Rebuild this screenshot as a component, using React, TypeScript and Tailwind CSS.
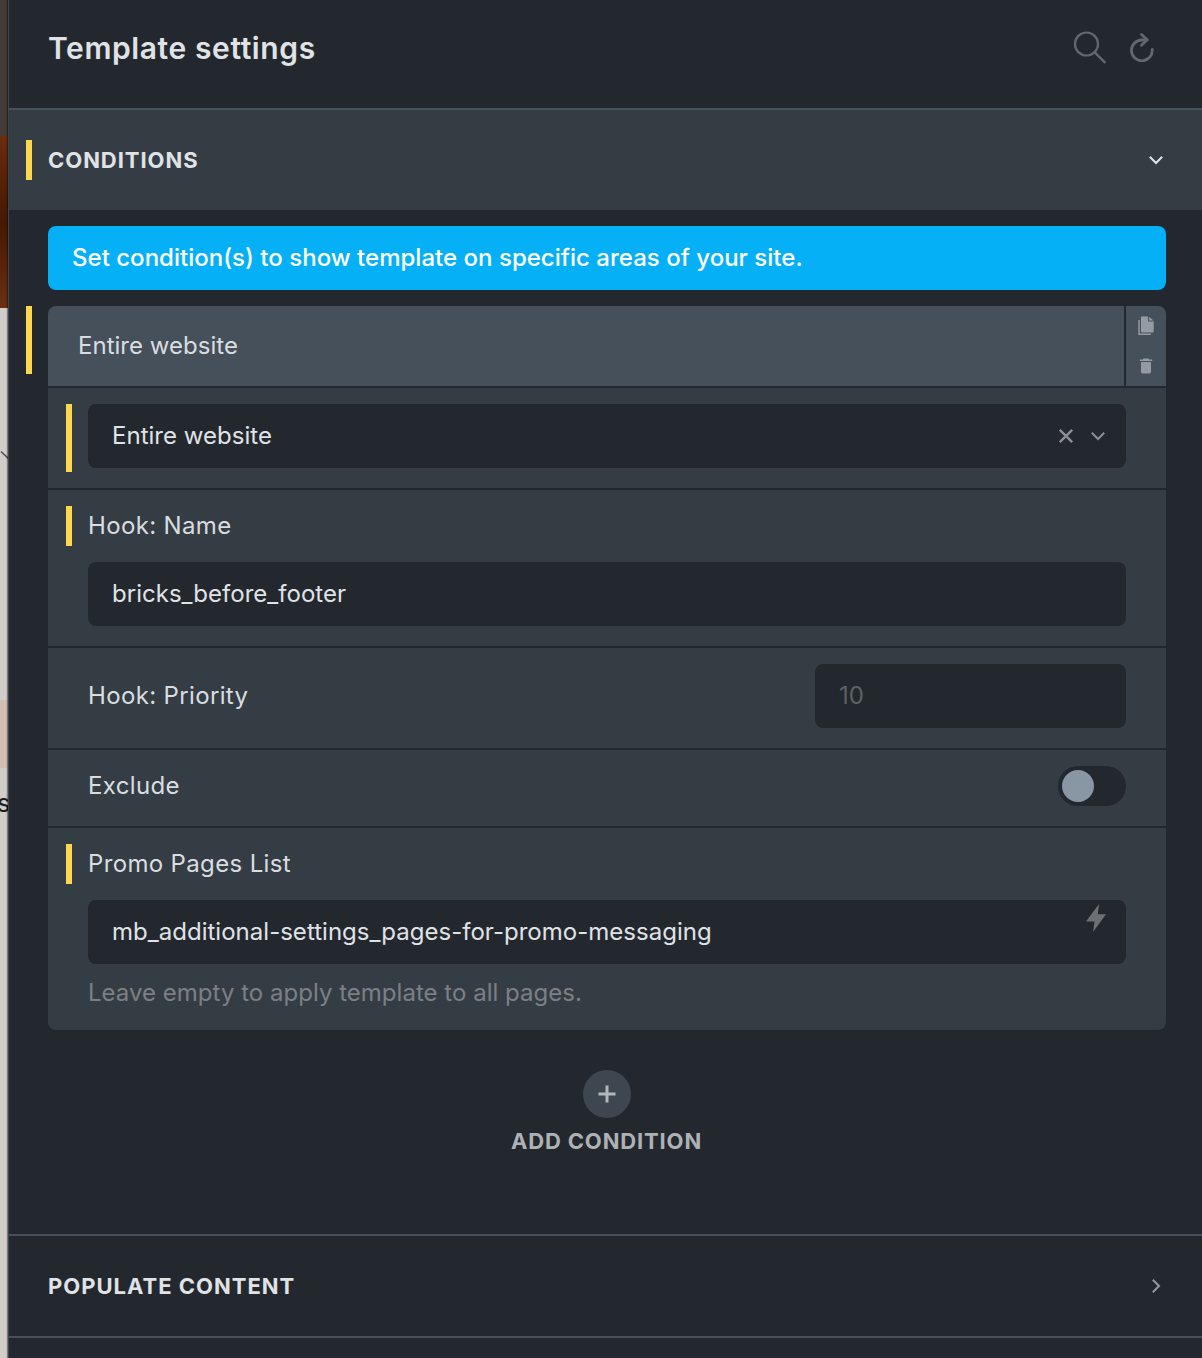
import React, { useState } from 'react';

interface ControlProps {
  label?: string;
  active?: boolean;
  inline?: boolean;
  description?: string;
  children: React.ReactNode;
}

// Yellow bar in front of everything that has a value set
const Marker: React.FC<{ show?: boolean; className?: string }> = ({ show = true, className = 'h-10' }) => (
  <div className={`w-1.5 shrink-0 mr-4 ${className} ${show ? 'bg-[#ffd64f]' : ''}`} />
);

const Chevron: React.FC<{ className?: string; width?: number }> = ({ className = '', width = 2 }) => (
  <svg viewBox="0 0 16 16" className={`w-4 h-4 ${className}`} fill="none" stroke="currentColor" strokeWidth={width}>
    <path d="M1.8 4.8 8 11l6.2-6.2" />
  </svg>
);

const Control: React.FC<ControlProps> = ({ label, active = false, inline, description, children }) => (
  <div className={`flex items-start bg-[#353d44] pl-[18px] pr-10 pt-4 ${description ? 'pb-[17px]' : 'pb-5'}`}>
    <Marker show={active} className={label ? 'h-10' : 'h-[68px] -mb-1'} />
    <div className={`flex-1 ${inline ? 'flex items-center justify-between' : ''}`}>
      {label && <label className="block h-10 leading-10 tracking-[0.35px] text-[#d9dde0]">{label}</label>}
      <div className={label && !inline ? 'mt-4' : ''}>{children}</div>
      {description && <p className="mt-[9px] h-10 leading-10 text-[#7c8084]">{description}</p>}
    </div>
  </div>
);

const Canvas: React.FC = () => (
  <div className="w-2 shrink-0 flex flex-col overflow-hidden bg-[#d1cdcb]">
    <div className="h-[136px] shrink-0 bg-[#443a36]" />
    <div className="h-[172px] shrink-0 bg-linear-to-b from-[#6b2c0e] via-[#451804] to-[#6b3010]" />
    <div className="h-[392px] shrink-0 pt-[142px]">
      <svg viewBox="0 0 8 12" className="w-2 h-3" fill="none" stroke="#555" strokeWidth="1.6">
        <path d="M1 1.5 9 9" />
      </svg>
    </div>
    <div className="h-[68px] shrink-0 bg-[#d4bfb5]" />
    <div className="-ml-[3px] pt-5 text-[25px] leading-[30px] text-[#1d1d1d]">s</div>
  </div>
);

export default function App() {
  const [exclude, setExclude] = useState(false);
  const [hookName, setHookName] = useState('bricks_before_footer');
  const [pages, setPages] = useState('mb_additional-settings_pages-for-promo-messaging');
  const field = 'block w-full h-16 px-6 pb-0.5 rounded-lg bg-[#23282f] text-[#e0e3e6] outline-none';

  return (
    <div className="flex h-[1358px] overflow-hidden bg-[#23282f] font-['Inter',sans-serif] text-[24px] tracking-[0.02px]">
      <Canvas />
      <div className="relative flex-1 min-w-0 flex flex-col border-l border-[#3f474e] bg-[#23282f] shadow-[-1px_0_1px_rgba(0,0,0,0.4)]">
        {/* Header */}
        <header className="flex items-center justify-between h-[108px] shrink-0 pl-[39px] pr-[47px] pb-3">
          <h1 className="text-[30px] font-semibold tracking-[0.6px] text-[#e0e3e6]">Template settings</h1>
          <div className="flex items-center gap-[22px] mb-0.5 text-[#63686b]">
            <svg viewBox="0 0 34 34" className="w-[34px] h-[34px]" fill="none" stroke="currentColor" strokeWidth="2.2">
              <circle cx="13.5" cy="14" r="11.5" />
              <path d="m21.8 22.3 10.5 10.5" strokeWidth="2.4" />
            </svg>
            <svg viewBox="0 0 26 30" className="w-[26px] h-[30px]" fill="none" stroke="currentColor" strokeWidth="2.8" strokeLinecap="round" strokeLinejoin="round">
              <path d="M23.2 17.5A10.4 10.4 0 1 1 12.8 8h5.2" />
              <path d="m12.5 2.4 5.7 5.4-5.7 5.4" />
            </svg>
          </div>
        </header>

        <section>
          <div className="flex items-center h-[102px] border-t-2 border-[#46505a] bg-[#353d44] pl-[17px] pr-[38px]">
            <Marker />
            <h2 className="flex-1 text-[22px] font-bold tracking-[0.95px] text-[#e0e3e6]">CONDITIONS</h2>
            <Chevron className="text-[#e0e3e6]" />
          </div>

          <div className="pt-4">
            <div className="ml-[39px] mr-9 h-16 leading-[64px] px-6 rounded-lg bg-[#06b0f7] font-medium text-white">
              Set condition(s) to show template on specific areas of your site.
            </div>

            <div className="flex items-start mt-4 pl-[17px] pr-9">
              <Marker className="h-[68px]" />
              <div className="flex-1 flex flex-col gap-0.5 rounded-lg overflow-hidden">
                <div className="flex gap-0.5 h-20">
                  <div className="flex-1 flex items-center pl-[30px] bg-[#46505a] text-[#d9dde0]">Entire website</div>
                  <div className="w-10 flex flex-col items-center bg-[#46505a] text-[#949ba2]">
                    <button className="h-10 flex items-center">
                      <svg viewBox="0 0 16 20" className="w-4 h-5" fill="currentColor">
                        <path d="M.3 4h1.5v13.4h11V19H1.1a.8.8 0 0 1-.8-.8z" />
                        <path d="M3.8.5H10V5.6h5.7v10a.8.8 0 0 1-.8.8H3.8a.8.8 0 0 1-.8-.8V1.3a.8.8 0 0 1 .8-.8z" />
                        <path d="M11.2.8 15.2 4.6h-4z" />
                      </svg>
                    </button>
                    <button className="h-10 flex items-center">
                      <svg viewBox="0 0 14 16" className="w-3.5 h-4" fill="currentColor">
                        <path d="M4.5.5h5l.5 1h3.2v1.4H.8V1.5H4z" />
                        <path d="M2 4h10v9.8a1.7 1.7 0 0 1-1.7 1.7H3.7A1.7 1.7 0 0 1 2 13.8z" />
                      </svg>
                    </button>
                  </div>
                </div>

                <Control active>
                  <div className="flex items-center h-16 pl-6 pr-5 rounded-lg bg-[#23282f]">
                    <span className="flex-1 text-[#e0e3e6]">Entire website</span>
                    <svg viewBox="0 0 16 16" className="w-4 h-4 mr-4 text-[#8b8e92]" fill="none" stroke="currentColor" strokeWidth="2.4">
                      <path d="m1.8 1.8 12.4 12.4M14.2 1.8 1.8 14.2" />
                    </svg>
                    <Chevron className="text-[#8b8e92]" />
                  </div>
                </Control>

                <Control label="Hook: Name" active>
                  <input className={field} value={hookName} onChange={e => setHookName(e.target.value)} />
                </Control>

                <Control label="Hook: Priority" inline>
                  <input className={`${field} max-w-[311px] placeholder:text-[#5d6164]`} placeholder="10" />
                </Control>

                <Control label="Exclude" inline>
                  <button
                    onClick={() => setExclude(!exclude)}
                    className={`flex items-center w-[68px] h-10 px-1 rounded-full bg-[#23282f] ${exclude ? 'justify-end' : ''}`}
                  >
                    <span className="w-8 h-8 rounded-full bg-[#8996a3]" />
                  </button>
                </Control>

                <Control label="Promo Pages List" active description="Leave empty to apply template to all pages.">
                  <div className="relative">
                    <input className={field} value={pages} onChange={e => setPages(e.target.value)} />
                    <svg viewBox="0 0 20 28" className="absolute top-1 right-5 w-5 h-7 text-[#6d7175]" fill="currentColor">
                      <path d="M13 0 0 17.5h8.5L7 28l13-17.7h-8.2z" />
                    </svg>
                  </div>
                </Control>
              </div>
            </div>
          </div>

          <div className="flex flex-col items-center h-[204px] pt-10 pl-[3px] pr-px">
            <button className="flex items-center justify-center w-12 h-12 rounded-full bg-[#3e464f] text-[#b3b7ba]">
              <svg viewBox="0 0 18 18" className="w-[18px] h-[18px]" fill="none" stroke="currentColor" strokeWidth="3">
                <path d="M9 .5v17M.5 9h17" />
              </svg>
            </button>
            <span className="mt-[7px] h-8 leading-8 text-[22px] font-bold tracking-[0.85px] text-[#aeb2b5]">ADD CONDITION</span>
          </div>
        </section>

        <section className="flex items-center justify-between h-[104px] shrink-0 border-y-2 border-[#46505a] pl-[39px] pr-[38px]">
          <h2 className="text-[22px] font-bold tracking-[1px] text-[#e0e3e6]">POPULATE CONTENT</h2>
          <Chevron className="-rotate-90 text-[#95989b]" />
        </section>
      </div>
    </div>
  );
}
